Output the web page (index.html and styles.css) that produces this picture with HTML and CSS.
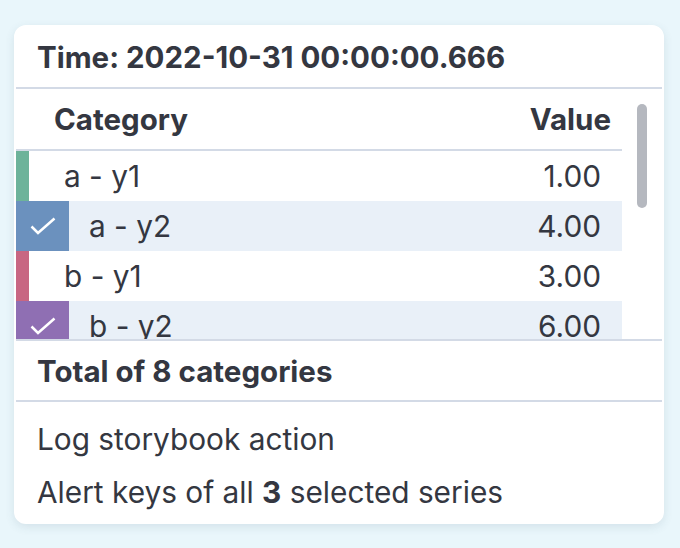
FILE: index.html
```html
<!DOCTYPE html>
<html lang="en">
<head>
    <meta charset="UTF-8">
    <meta name="viewport" content="width=device-width, initial-scale=1.0">
    <title>Tooltip</title>
    <link rel="stylesheet" href="styles.css">
</head>
<body>
    <div class="tooltip">
        <div class="tooltip-header">Time: 2022-10-31 00:00:00.666</div>
        <div class="tooltip-body">
            <div class="table-wrap">
                <div class="table-head">
                    <span class="col-label">Category</span>
                    <span class="col-value">Value</span>
                </div>
                <div class="row">
                    <span class="swatch green"></span>
                    <span class="label">a - y1</span>
                    <span class="value">1.00</span>
                </div>
                <div class="row selected">
                    <span class="swatch blue">
                        <svg viewBox="0 0 26 18" width="26" height="18"><polyline points="1.5,9.5 8,16 24.5,1.5" /></svg>
                    </span>
                    <span class="label">a - y2</span>
                    <span class="value">4.00</span>
                </div>
                <div class="row">
                    <span class="swatch pink"></span>
                    <span class="label">b - y1</span>
                    <span class="value">3.00</span>
                </div>
                <div class="row selected">
                    <span class="swatch purple">
                        <svg viewBox="0 0 26 18" width="26" height="18"><polyline points="1.5,9.5 8,16 24.5,1.5" /></svg>
                    </span>
                    <span class="label">b - y2</span>
                    <span class="value">6.00</span>
                </div>
                <div class="row">
                    <span class="swatch green"></span>
                    <span class="label">c - y1</span>
                    <span class="value">2.00</span>
                </div>
            </div>
            <div class="scroll-track">
                <div class="scroll-thumb"></div>
            </div>
        </div>
        <div class="tooltip-total">Total of 8 categories</div>
        <div class="tooltip-actions">
            <div class="action">Log storybook action</div>
            <div class="action">Alert keys of all <b>3</b> selected series</div>
        </div>
    </div>
</body>
</html>
```

FILE: styles.css
```css
*{
    margin: 0;
    padding: 0;
    box-sizing: border-box;
}
body{
    min-height: 100vh;
    background: #e9f6fb;
    font-family: Inter, "Noto Sans", sans-serif;
    color: #343741;
    font-size: 29.8px;
}
.tooltip{
    width: 650px;
    margin: 25px 0 0 14px;
    background: #fff;
    border: 2px solid #fff;
    border-radius: 12px;
    box-shadow: 0 3px 10px rgba(60, 90, 110, 0.12);
}
.tooltip-header{
    height: 62px;
    padding-left: 21px;
    display: flex;
    align-items: center;
    font-weight: 700;
    font-size: 29.5px;
    border-bottom: 2px solid #d3dae6;
}
.tooltip-body{
    display: flex;
    height: 252px;
    border-bottom: 2px solid #d3dae6;
}
.table-wrap{
    width: 606px;
    overflow: hidden;
}
.table-head{
    height: 62px;
    display: flex;
    align-items: center;
    justify-content: space-between;
    padding: 0 11px 0 38px;
    font-weight: 700;
    font-size: 29.5px;
    border-bottom: 2px solid #d3dae6;
}
.row{
    height: 50px;
    display: flex;
    align-items: center;
}
.row.selected{
    background: #e9f0f8;
}
.swatch{
    width: 13px;
    height: 100%;
    display: flex;
    align-items: center;
    justify-content: center;
}
.row.selected .swatch{
    width: 53px;
}
.swatch svg{
    fill: none;
    stroke: #fff;
    stroke-width: 2.5;
}
.green{ background: #6db39a; }
.blue{ background: #6b91be; }
.pink{ background: #c86682; }
.purple{ background: #8f6fb3; }
.label{
    margin-left: 35px;
    flex: 1;
}
.row.selected .label{
    margin-left: 20px;
}
.value{
    padding-right: 21px;
}
.scroll-track{
    flex: 1;
    padding: 15px 0 0 15px;
}
.scroll-thumb{
    width: 10px;
    height: 104px;
    border-radius: 5px;
    background: #b5b8bf;
}
.tooltip-total{
    height: 61px;
    padding-left: 21px;
    display: flex;
    align-items: center;
    font-weight: 700;
    font-size: 29.5px;
    border-bottom: 2px solid #d3dae6;
}
.tooltip-actions{
    padding: 11px 0 3px 21px;
}
.action{
    line-height: 53px;
}
```
